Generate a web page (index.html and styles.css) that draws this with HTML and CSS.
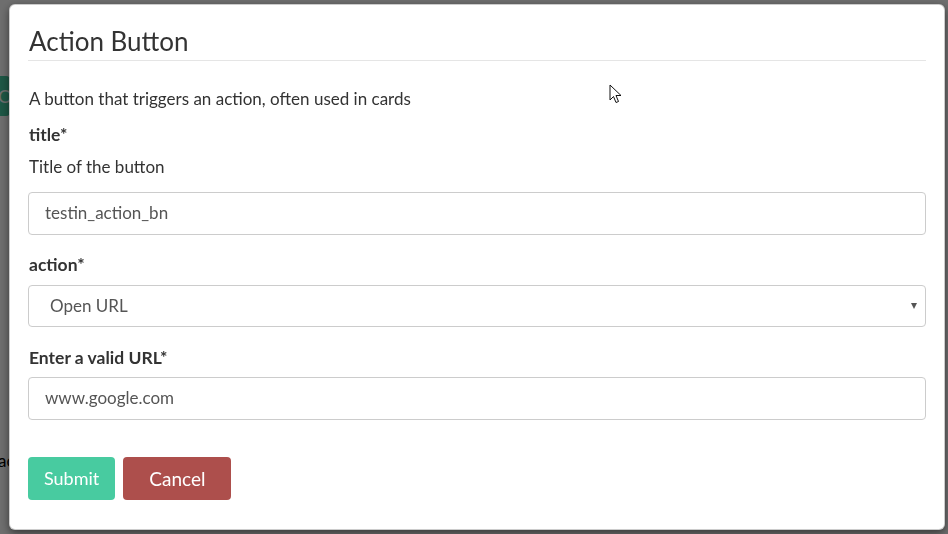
FILE: index.html
```html
<!DOCTYPE html>
<html>
<head>
<meta charset="utf-8">
<link rel="stylesheet" href="styles.css">
</head>
<body>
<div class="page">
  <div class="bg-button"><span class="bg-button-text">Open</span></div>
  <div class="bg-text">ac</div>
</div>
<div class="overlay">
  <div class="modal">
    <div class="modal-header">
      <h4 class="modal-title">Action Button</h4>
    </div>
    <p class="desc">A button that triggers an action, often used in cards</p>
    <label class="label label-first">title*</label>
    <p class="help">Title of the button</p>
    <div class="control">testin_action_bn</div>
    <label class="label label-mid">action*</label>
    <div class="control select"><span class="select-text">Open URL</span><span class="caret"></span></div>
    <label class="label label-url">Enter a valid URL*</label>
    <div class="control">www.google.com</div>
    <div class="actions">
      <button class="btn btn-submit">Submit</button>
      <button class="btn btn-cancel">Cancel</button>
    </div>
  </div>
  <svg class="cursor" width="14" height="21" viewBox="0 0 14 21">
    <path d="M1 1 L1 16 L4.5 12.5 L7 18.5 L9.5 17.5 L7 11.5 L12 11.5 Z" fill="#fff" stroke="#111" stroke-width="1" stroke-linejoin="round"/>
  </svg>
</div>
</body>
</html>
```
FILE: styles.css
```css
* { box-sizing: border-box; }
html, body { margin: 0; padding: 0; }
body {
  width: 948px;
  height: 534px;
  overflow: hidden;
  background: #fff;
  font-family: Lato, "Open Sans", "Liberation Sans", sans-serif;
  color: #333;
}
.page {
  padding-top: 76px;
}
.bg-button {
  width: 40px;
  height: 40px;
  margin-left: -30px;
  background: #46c9a0;
  color: #fff;
  font-size: 18px;
  line-height: 40px;
  border-radius: 4px;
  overflow: hidden;
  white-space: nowrap;
}
.bg-button-text {
  display: block;
  margin-left: 28px;
}
.bg-text {
  margin-top: 334px;
  margin-left: -2px;
  font-size: 17px;
  line-height: 22px;
  color: #000;
}
.overlay {
  position: fixed;
  inset: 0;
  background: rgba(0, 0, 0, 0.57);
  padding: 4px 3px 4px 9px;
}
.modal {
  width: 936px;
  height: 526px;
  background: #fff;
  border-radius: 6px;
  border: 1px solid rgba(0, 0, 0, 0.2);
  box-shadow: 0 3px 9px rgba(0, 0, 0, 0.5);
  padding: 0 18px;
}
.modal-header {
  padding: 21px 0 3px;
  border-bottom: 1px solid #e5e5e5;
}
.modal-title {
  margin: 0 0 0 1px;
  font-size: 26px;
  font-weight: 400;
  line-height: 31px;
  color: #333;
}
.desc {
  margin: 27px 0 0 1px;
  font-size: 17px;
  line-height: 22px;
}
.label {
  display: block;
  font-weight: 700;
  font-size: 17.5px;
  line-height: 22px;
  margin-left: 1px;
}
.label-first { margin-top: 14px; }
.label-mid { margin-top: 19px; }
.label-url { margin-top: 20px; }
.help {
  margin: 10px 0 0 1px;
  font-size: 17px;
  line-height: 22px;
}
.control {
  height: 43px;
  border: 1px solid #ccc;
  border-radius: 4px;
  padding: 0 16px;
  font-size: 17px;
  line-height: 40px;
  color: #555;
}
.help + .control { margin-top: 14px; }
.label-mid + .control { margin-top: 9px; height: 42px; }
.label-url + .control { margin-top: 8px; }
.select {
  display: flex;
  align-items: center;
  justify-content: space-between;
  padding: 0 8px 0 21px;
}
.caret {
  width: 0;
  height: 0;
  border-left: 3.5px solid transparent;
  border-right: 3.5px solid transparent;
  border-top: 6px solid #555;
}
.actions {
  margin-top: 37px;
  display: flex;
  gap: 8px;
}
.btn {
  height: 43px;
  border: none;
  border-radius: 4px;
  color: #fff;
  font-family: Lato, "Open Sans", "Liberation Sans", sans-serif;
  font-size: 18px;
  line-height: 41px;
  padding: 0 16px;
}
.btn-submit { background: #48cba0; padding: 0 16px; }
.btn-cancel { background: #ad4f4c; padding: 0 26px; font-size: 19px; }
.cursor {
  position: absolute;
  left: 609px;
  top: 84px;
}
```
